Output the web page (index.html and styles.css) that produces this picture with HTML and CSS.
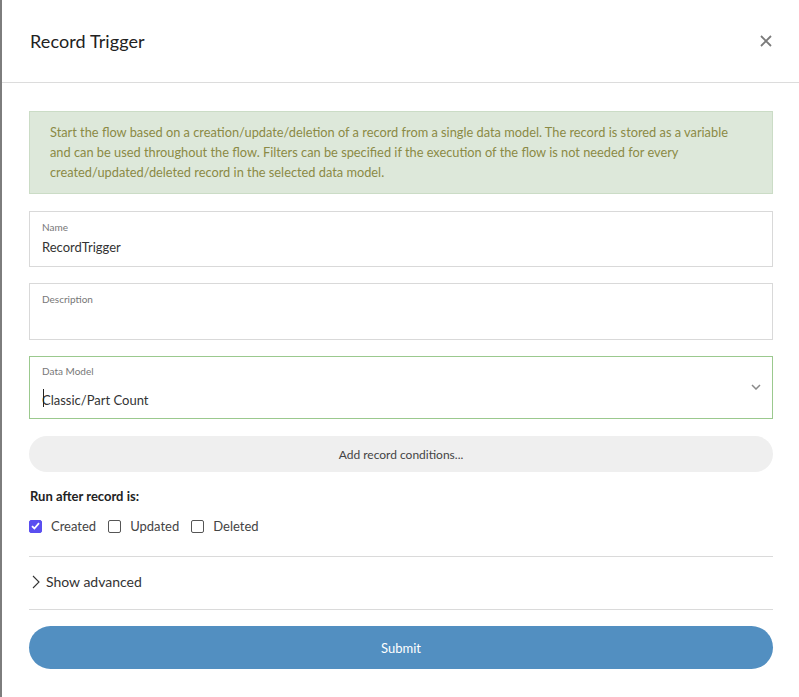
FILE: index.html
```html
<!DOCTYPE html>
<html>
<head>
<meta charset="utf-8">
<link rel="stylesheet" href="styles.css">
</head>
<body>
<div class="modal">
  <header class="modal-header">
    <h1 class="title">Record Trigger</h1>
    <button class="close" aria-label="Close">
      <svg width="12" height="12" viewBox="0 0 12 12"><path d="M1 1L11 11M11 1L1 11" stroke="#7a7a7a" stroke-width="1.8" fill="none"/></svg>
    </button>
  </header>
  <div class="modal-body">
    <div class="alert">Start the flow based on a creation/update/deletion of a record from a single data model. The record is stored as a variable and can be used throughout the flow. Filters can be specified if the execution of the flow is not needed for every created/updated/deleted record in the selected data model.</div>

    <div class="field">
      <div class="label">Name</div>
      <div class="value">RecordTrigger</div>
    </div>

    <div class="field tall">
      <div class="label">Description</div>
      <div class="value"></div>
    </div>

    <div class="field select">
      <div class="select-main">
        <div class="label">Data Model</div>
        <div class="value"><span class="caret"></span>Classic/Part Count</div>
      </div>
      <svg class="chevron" width="10" height="6" viewBox="0 0 10 6"><path d="M1 1L5 5L9 1" stroke="#8a8a8a" stroke-width="1.5" fill="none"/></svg>
    </div>

    <button class="btn-secondary">Add record conditions...</button>

    <div class="run-label">Run after record is:</div>
    <div class="checks">
      <label class="check"><span class="box checked"><svg width="9" height="8" viewBox="0 0 9 8"><path d="M1 4.2L3.4 6.5L8 1.2" stroke="#fff" stroke-width="1.8" fill="none"/></svg></span>Created</label>
      <label class="check"><span class="box"></span>Updated</label>
      <label class="check"><span class="box"></span>Deleted</label>
    </div>

    <div class="advanced">
      <svg width="8" height="14" viewBox="0 0 8 14"><path d="M1 1L7 7L1 13" stroke="#333" stroke-width="1.1" fill="none"/></svg>
      <span>Show advanced</span>
    </div>

    <button class="btn-primary">Submit</button>
  </div>
</div>
</body>
</html>
```

FILE: styles.css
```css
html, body {
  margin: 0;
  padding: 0;
  background: #fff;
}
body {
  font-family: Lato, "Noto Sans", sans-serif;
  color: #333;
}
.modal {
  box-sizing: border-box;
  width: 799px;
  height: 697px;
  border-left: 2px solid #7d7d7d;
  background: #fff;
}
.modal-header {
  box-sizing: border-box;
  height: 83px;
  border-bottom: 1px solid #dcdcdc;
  display: flex;
  align-items: center;
  justify-content: space-between;
  padding: 0 26px 0 28px;
}
.title {
  margin: 0;
  font-size: 18px;
  font-weight: 400;
  color: #222;
  letter-spacing: 0.1px;
}
.close {
  border: 0;
  background: none;
  padding: 0;
  width: 14px;
  height: 14px;
  display: flex;
  align-items: center;
  justify-content: center;
}
.modal-body {
  padding: 28px 26px 0 27px;
  display: flex;
  flex-direction: column;
}
.alert {
  background: #dde8da;
  border: 1px solid #cbdcc6;
  color: #8b8a45;
  font-size: 12.8px;
  line-height: 20px;
  padding: 10px 24px 11px 20px;
  margin-bottom: 17px;
}
.field {
  box-sizing: border-box;
  border: 1px solid #d9d9d9;
  height: 56px;
  padding: 9px 12px 0 12px;
  margin-bottom: 16px;
}
.field.tall {
  height: 57px;
}
.label {
  font-size: 10px;
  color: #777;
  line-height: 12px;
}
.value {
  font-size: 13px;
  color: #333;
  line-height: 16px;
  margin-top: 6px;
  position: relative;
}
.select {
  height: 63px;
  border-color: #9bc98e;
  display: flex;
  align-items: flex-start;
  padding: 0 11px 0 12px;
  margin-bottom: 17px;
}
.select-main {
  flex: 1;
  padding-top: 8px;
}
.select .value {
  margin-top: 15px;
}
.caret {
  position: absolute;
  left: 1px;
  top: -3px;
  width: 1px;
  height: 18px;
  background: #222;
}
.chevron {
  align-self: center;
  margin-top: -2px;
}
.btn-secondary {
  height: 36px;
  border: 0;
  border-radius: 18px;
  background: #efefef;
  font-family: inherit;
  font-size: 12px;
  color: #444;
  margin-bottom: 16px;
}
.run-label {
  font-weight: 700;
  font-size: 13px;
  color: #222;
  margin-left: 1px;
  line-height: 16px;
  margin-bottom: 14px;
}
.checks {
  display: flex;
  gap: 12px;
  font-size: 13px;
  color: #444;
  padding-bottom: 22px;
  border-bottom: 1px solid #dadada;
}
.check {
  display: flex;
  align-items: center;
  gap: 9px;
  line-height: 16px;
}
.box {
  box-sizing: border-box;
  width: 13px;
  height: 13px;
  border: 1px solid #555;
  border-radius: 2px;
  display: flex;
  align-items: center;
  justify-content: center;
}
.box.checked {
  background: #5a4ef0;
  border-color: #5a4ef0;
}
.advanced {
  box-sizing: border-box;
  height: 53px;
  display: flex;
  align-items: center;
  gap: 6px;
  padding: 0 0 3px 3px;
  font-size: 14px;
  color: #333;
  border-bottom: 1px solid #dadada;
}
.btn-primary {
  margin-top: 16px;
  height: 43px;
  border: 0;
  border-radius: 22px;
  background: #528fc1;
  color: #fff;
  font-family: inherit;
  font-size: 13px;
}
```
